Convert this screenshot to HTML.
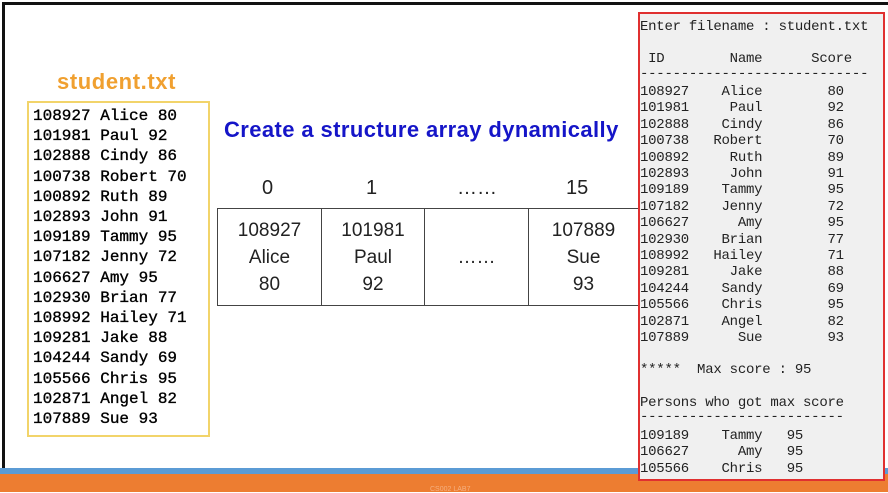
<!DOCTYPE html>
<html><head><meta charset="utf-8"><style>
*{margin:0;padding:0;box-sizing:border-box}
body{width:888px;height:492px;overflow:hidden;background:#fff;position:relative;font-family:"Liberation Sans",sans-serif}
.a{position:absolute;white-space:pre}
.frame{position:absolute;left:2px;top:2px;width:900px;height:480px;border-left:3px solid #111;border-top:3px solid #111}
.blue{position:absolute;left:0;top:468px;width:888px;height:6px;background:#5b9bd5}
.orange{position:absolute;left:0;top:474px;width:888px;height:18px;background:#ed7d31}
.lbox{position:absolute;left:27px;top:101px;width:183px;height:336px;border:2px solid #f2d46a;background:#fff}
.lt{font-family:"Liberation Mono",monospace;font-size:16px;color:#000;-webkit-text-stroke:0.35px #000;line-height:20.2px;position:absolute;left:33px;top:106px;white-space:pre}
.con{position:absolute;left:638px;top:12px;width:247px;height:469px;background:#f0f0f0;border:2px solid #e03030}
.m{font-family:"Liberation Mono",monospace;font-size:14px;color:#222;position:absolute;white-space:pre;line-height:16.4px;letter-spacing:-0.25px}
table{position:absolute;left:217px;top:208px;border-collapse:collapse}
td{border:1.5px solid #444;text-align:center;font-size:19px;line-height:27px;color:#222;vertical-align:middle;height:97px}
</style></head><body>
<div class="frame"></div>
<div class="blue"></div><div class="orange"></div>
<div class="a" style="left:430px;top:486px;font-size:7px;color:#f5b080">CS002 LAB7</div>
<div class="a" style="left:57px;top:69px;font-size:22px;font-weight:bold;color:#f0a030;letter-spacing:0.6px">student.txt</div>
<div class="lbox"></div>
<div class="lt">108927 Alice 80
101981 Paul 92
102888 Cindy 86
100738 Robert 70
100892 Ruth 89
102893 John 91
109189 Tammy 95
107182 Jenny 72
106627 Amy 95
102930 Brian 77
108992 Hailey 71
109281 Jake 88
104244 Sandy 69
105566 Chris 95
102871 Angel 82
107889 Sue 93</div>
<div class="a" style="left:224px;top:117px;font-size:22px;font-weight:bold;color:#1515c8;letter-spacing:0.4px">Create a structure array dynamically</div>
<div class="a" style="left:262px;top:177px;font-size:20px;color:#222">0</div>
<div class="a" style="left:366px;top:177px;font-size:20px;color:#222">1</div>
<div class="a" style="left:457px;top:177px;font-size:20px;color:#222">……</div>
<div class="a" style="left:566px;top:177px;font-size:20px;color:#222">15</div>
<table><tr>
<td style="width:104px">108927<br>Alice<br>80</td>
<td style="width:103px">101981<br>Paul<br>92</td>
<td style="width:104px">……</td>
<td style="width:110px">107889<br>Sue<br>93</td>
</tr></table>
<div class="con"></div>
<div class="m" style="left:640px;top:19px">Enter filename : student.txt</div>
<div class="m" style="left:640px;top:51px"> ID        Name      Score</div>
<div class="m" style="left:640px;top:66px">----------------------------</div>
<div class="m" style="left:640px;top:84px">108927    Alice        80
101981     Paul        92
102888    Cindy        86
100738   Robert        70
100892     Ruth        89
102893     John        91
109189    Tammy        95
107182    Jenny        72
106627      Amy        95
102930    Brian        77
108992   Hailey        71
109281     Jake        88
104244    Sandy        69
105566    Chris        95
102871    Angel        82
107889      Sue        93</div>
<div class="m" style="left:640px;top:362px">*****  Max score : 95</div>
<div class="m" style="left:640px;top:395px">Persons who got max score</div>
<div class="m" style="left:640px;top:409px">-------------------------</div>
<div class="m" style="left:640px;top:428px">109189    Tammy   95
106627      Amy   95
105566    Chris   95</div>
</body></html>
